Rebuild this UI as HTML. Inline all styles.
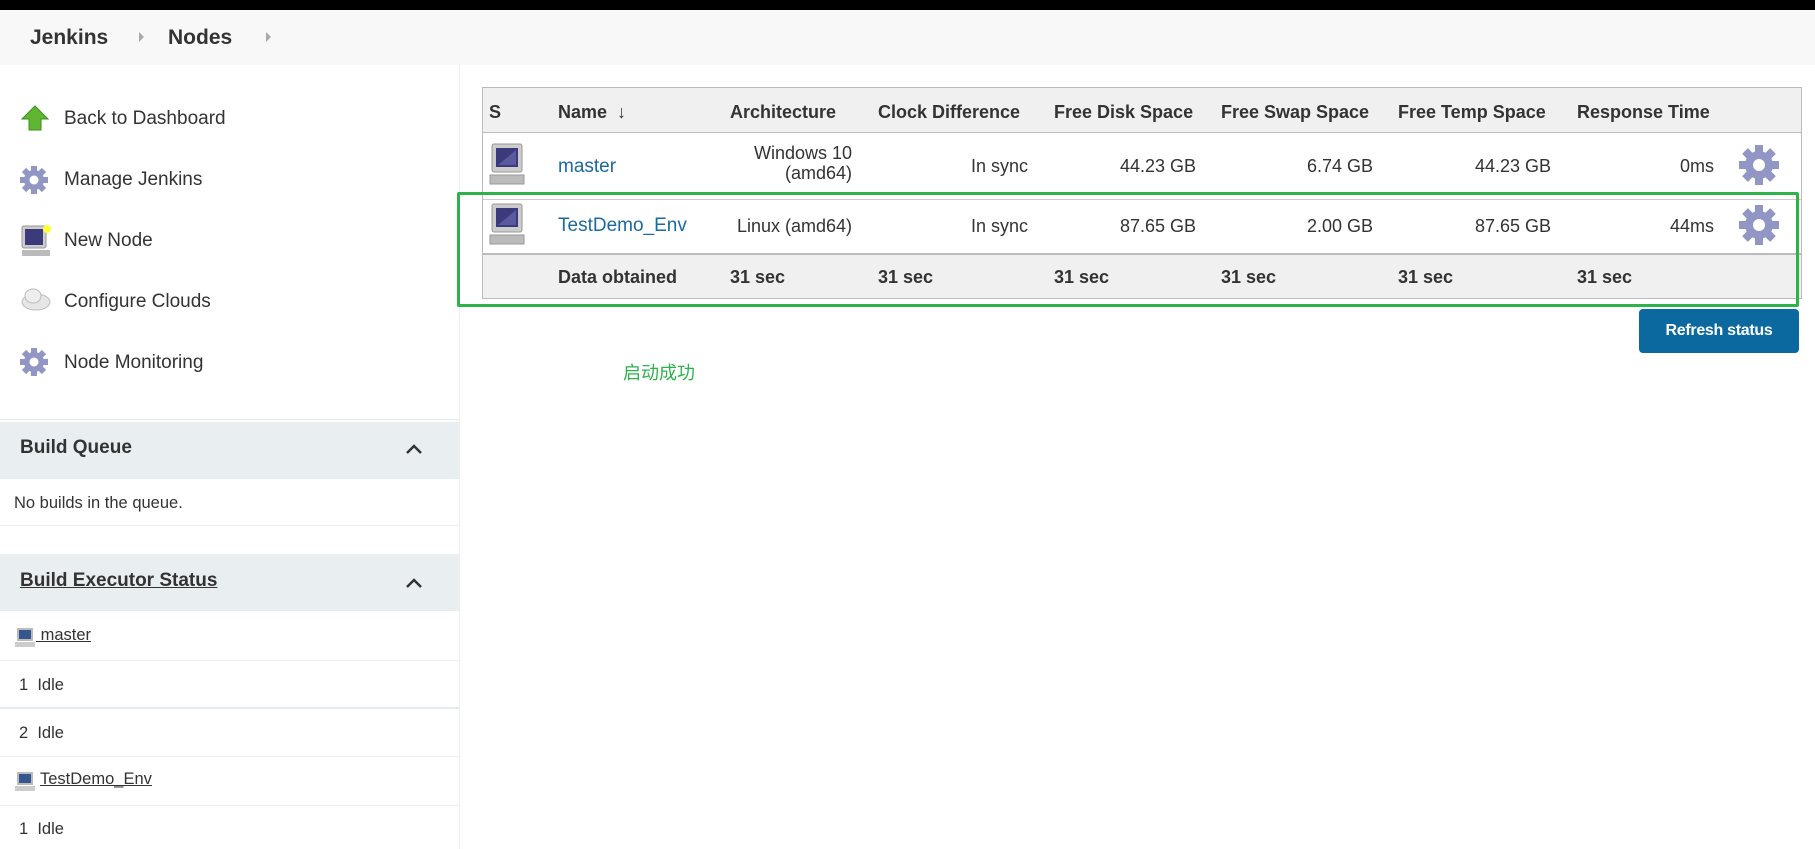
<!DOCTYPE html>
<html><head><meta charset="utf-8"><style>
*{margin:0;padding:0;box-sizing:border-box}
body{width:1815px;height:849px;overflow:hidden;background:#fff;font-family:"Liberation Sans","Noto Sans CJK SC",sans-serif;color:#333;position:relative}
.a{position:absolute;white-space:nowrap}
.b{font-weight:bold}
.r{text-align:right}
.v{line-height:20px}
.h{font-size:17.5px}
</style></head><body>
<div class="a" style="left:0;top:0;width:1815px;height:10px;background:#000"></div>
<div class="a" style="left:0;top:10px;width:1815px;height:55px;background:#f8f8f8"></div>
<div class="a b" style="left:30px;top:26px;font-size:21px;color:#333">Jenkins</div>
<div class="a" style="left:139px;top:32px;width:0;height:0;border-left:5px solid #aaa;border-top:5px solid transparent;border-bottom:5px solid transparent"></div>
<div class="a b" style="left:168px;top:26px;font-size:21px;color:#333">Nodes</div>
<div class="a" style="left:266px;top:32px;width:0;height:0;border-left:5px solid #aaa;border-top:5px solid transparent;border-bottom:5px solid transparent"></div>

<div class="a" style="left:459px;top:65px;width:1px;height:784px;background:#eee"></div>

<svg class="a" style="left:20px;top:104px" width="30" height="28"><path d="M15 2 L28 15 H21 V26 H9 V15 H2 Z" fill="#5fb633" stroke="#3d8f1e"/></svg>
<div class="a" style="left:64px;top:108px;font-size:19px">Back to Dashboard</div>
<svg class="a" style="left:18px;top:164px" width="32" height="32"><g fill="#9196c4"><circle cx="16" cy="16" r="10"/><g stroke-width="6" stroke="#9196c4"><path d="M16 2V30M2 16H30M6 6L26 26M26 6L6 26"/></g></g><circle cx="16" cy="16" r="4.5" fill="#fff"/></svg>
<div class="a" style="left:64px;top:169px;font-size:19px">Manage Jenkins</div>
<svg class="a" style="left:20px;top:224px" width="32" height="34"><rect x="2" y="2" width="24" height="22" rx="2" fill="#ccc" stroke="#999"/><rect x="5" y="5" width="18" height="16" fill="#3b3a7a"/><rect x="2" y="26" width="28" height="6" fill="#bbb"/><circle cx="27" cy="5" r="4" fill="#ff3"/></svg>
<div class="a" style="left:64px;top:230px;font-size:19px">New Node</div>
<svg class="a" style="left:20px;top:286px" width="32" height="26"><ellipse cx="16" cy="16" rx="14" ry="8" fill="#e6e6e6" stroke="#bbb"/><ellipse cx="13" cy="10" rx="8" ry="7" fill="#eee" stroke="#bbb"/></svg>
<div class="a" style="left:64px;top:291px;font-size:19px">Configure Clouds</div>
<svg class="a" style="left:18px;top:346px" width="32" height="32"><g fill="#9196c4"><circle cx="16" cy="16" r="10"/><g stroke-width="6" stroke="#9196c4"><path d="M16 2V30M2 16H30M6 6L26 26M26 6L6 26"/></g></g><circle cx="16" cy="16" r="4.5" fill="#fff"/></svg>
<div class="a" style="left:64px;top:352px;font-size:19px">Node Monitoring</div>

<div class="a" style="left:0;top:419px;width:459px;height:1px;background:#e4ebef"></div>
<div class="a" style="left:0;top:422px;width:459px;height:57px;background:#e9eef1"></div>
<div class="a b" style="left:20px;top:437px;font-size:19px">Build Queue</div>
<svg class="a" style="left:405px;top:443px" width="18" height="12"><path d="M2 10L9 3L16 10" stroke="#333" stroke-width="2.5" fill="none"/></svg>
<div class="a" style="left:14px;top:494px;font-size:16.5px">No builds in the queue.</div>
<div class="a" style="left:0;top:525px;width:459px;height:1px;background:#eee"></div>

<div class="a" style="left:0;top:554px;width:459px;height:57px;background:#e9eef1"></div>
<div class="a b" style="left:20px;top:570px;font-size:19px;text-decoration:underline">Build Executor Status</div>
<svg class="a" style="left:405px;top:577px" width="18" height="12"><path d="M2 10L9 3L16 10" stroke="#333" stroke-width="2.5" fill="none"/></svg>
<svg class="a" style="left:14px;top:627px" width="22" height="21"><rect x="3" y="1" width="16" height="13" fill="#bbb"/><rect x="5" y="3" width="12" height="9" fill="#35578f"/><rect x="1" y="15" width="20" height="5" fill="#ccc"/></svg>
<div class="a" style="left:36px;top:626px;font-size:16.5px;text-decoration:underline">&nbsp;master</div>
<div class="a" style="left:0;top:660px;width:459px;height:1px;background:#e8eef2"></div>
<div class="a" style="left:19px;top:676px;font-size:16.5px">1&nbsp;&nbsp;Idle</div>
<div class="a" style="left:0;top:707px;width:459px;height:2px;background:#e4ebef"></div>
<div class="a" style="left:19px;top:724px;font-size:16.5px">2&nbsp;&nbsp;Idle</div>
<div class="a" style="left:0;top:756px;width:459px;height:1px;background:#e8eef2"></div>
<svg class="a" style="left:14px;top:771px" width="22" height="21"><rect x="3" y="1" width="16" height="13" fill="#bbb"/><rect x="5" y="3" width="12" height="9" fill="#35578f"/><rect x="1" y="15" width="20" height="5" fill="#ccc"/></svg>
<div class="a" style="left:40px;top:770px;font-size:16.5px;text-decoration:underline">TestDemo_Env</div>
<div class="a" style="left:0;top:805px;width:459px;height:1px;background:#e8eef2"></div>
<div class="a" style="left:19px;top:820px;font-size:16.5px">1&nbsp;&nbsp;Idle</div>

<div class="a" style="left:482px;top:87px;width:1320px;height:212px;border:1px solid #bbb"></div>
<div class="a" style="left:483px;top:88px;width:1318px;height:45px;background:#f0f0f0;border-bottom:1px solid #bbb"></div>
<div class="a" style="left:483px;top:199px;width:1318px;height:1px;background:#ccc"></div>
<div class="a" style="left:483px;top:253px;width:1318px;height:45px;background:#f0f0f0;border-top:2px solid #bbb"></div>

<div class="a b h" style="left:489px;top:102px;font-size:18px">S</div>
<div class="a b h" style="left:558px;top:102px;font-size:18px">Name&nbsp; <span style="font-weight:normal">↓</span></div>
<div class="a b h" style="left:730px;top:102px;font-size:18px">Architecture</div>
<div class="a b h" style="left:878px;top:102px;font-size:18px">Clock Difference</div>
<div class="a b h" style="left:1054px;top:102px;font-size:18px">Free Disk Space</div>
<div class="a b h" style="left:1221px;top:102px;font-size:18px">Free Swap Space</div>
<div class="a b h" style="left:1398px;top:102px;font-size:18px">Free Temp Space</div>
<div class="a b h" style="left:1577px;top:102px;font-size:18px">Response Time</div>

<svg class="a" style="left:489px;top:143px" width="44" height="44"><rect x="3" y="1" width="30" height="28" rx="2" fill="#ccc" stroke="#999"/><rect x="7" y="5" width="22" height="19" fill="#3b3a7a"/><path d="M9 22L27 7V22Z" fill="#5a5aa0"/><rect x="1" y="32" width="34" height="9" fill="#bbb" stroke="#999"/></svg>
<div class="a" style="left:558px;top:156px;font-size:19px;color:#1b6a9e">master</div>
<div class="a r v" style="left:700px;top:143px;width:152px;font-size:18px">Windows 10<br>(amd64)</div>
<div class="a r" style="left:900px;top:156px;width:128px;font-size:18px">In sync</div>
<div class="a r" style="left:1060px;top:156px;width:136px;font-size:18px">44.23 GB</div>
<div class="a r" style="left:1240px;top:156px;width:133px;font-size:18px">6.74 GB</div>
<div class="a r" style="left:1420px;top:156px;width:131px;font-size:18px">44.23 GB</div>
<div class="a r" style="left:1600px;top:156px;width:114px;font-size:18px">0ms</div>
<svg class="a" style="left:1737px;top:143px" width="44" height="44"><g fill="#9196c4"><circle cx="22" cy="22" r="14"/><g stroke-width="8" stroke="#9196c4"><path d="M22 2V42M2 22H42M8 8L36 36M36 8L8 36"/></g></g><circle cx="22" cy="22" r="6" fill="#fff"/></svg>

<svg class="a" style="left:489px;top:203px" width="44" height="44"><rect x="3" y="1" width="30" height="28" rx="2" fill="#ccc" stroke="#999"/><rect x="7" y="5" width="22" height="19" fill="#3b3a7a"/><path d="M9 22L27 7V22Z" fill="#5a5aa0"/><rect x="1" y="32" width="34" height="9" fill="#bbb" stroke="#999"/></svg>
<div class="a" style="left:558px;top:215px;font-size:19px;color:#1b6a9e">TestDemo_Env</div>
<div class="a r" style="left:700px;top:216px;width:152px;font-size:18px">Linux (amd64)</div>
<div class="a r" style="left:900px;top:216px;width:128px;font-size:18px">In sync</div>
<div class="a r" style="left:1060px;top:216px;width:136px;font-size:18px">87.65 GB</div>
<div class="a r" style="left:1240px;top:216px;width:133px;font-size:18px">2.00 GB</div>
<div class="a r" style="left:1420px;top:216px;width:131px;font-size:18px">87.65 GB</div>
<div class="a r" style="left:1600px;top:216px;width:114px;font-size:18px">44ms</div>
<svg class="a" style="left:1737px;top:203px" width="44" height="44"><g fill="#9196c4"><circle cx="22" cy="22" r="14"/><g stroke-width="8" stroke="#9196c4"><path d="M22 2V42M2 22H42M8 8L36 36M36 8L8 36"/></g></g><circle cx="22" cy="22" r="6" fill="#fff"/></svg>

<div class="a b" style="left:558px;top:267px;font-size:18px">Data obtained</div>
<div class="a b" style="left:730px;top:267px;font-size:18px">31 sec</div>
<div class="a b" style="left:878px;top:267px;font-size:18px">31 sec</div>
<div class="a b" style="left:1054px;top:267px;font-size:18px">31 sec</div>
<div class="a b" style="left:1221px;top:267px;font-size:18px">31 sec</div>
<div class="a b" style="left:1398px;top:267px;font-size:18px">31 sec</div>
<div class="a b" style="left:1577px;top:267px;font-size:18px">31 sec</div>

<div class="a" style="left:457px;top:192px;width:1342px;height:115px;border:3px solid #2db34a;border-radius:2px"></div>

<div class="a b" style="left:1639px;top:309px;width:160px;height:44px;background:#0b69a0;border-radius:4px;color:#fff;font-size:16px;text-align:center;line-height:44px;letter-spacing:-0.3px">Refresh status</div>

<div class="a" style="left:623px;top:359px;font-size:18px;color:#2eb24c">启动成功</div>
</body></html>
